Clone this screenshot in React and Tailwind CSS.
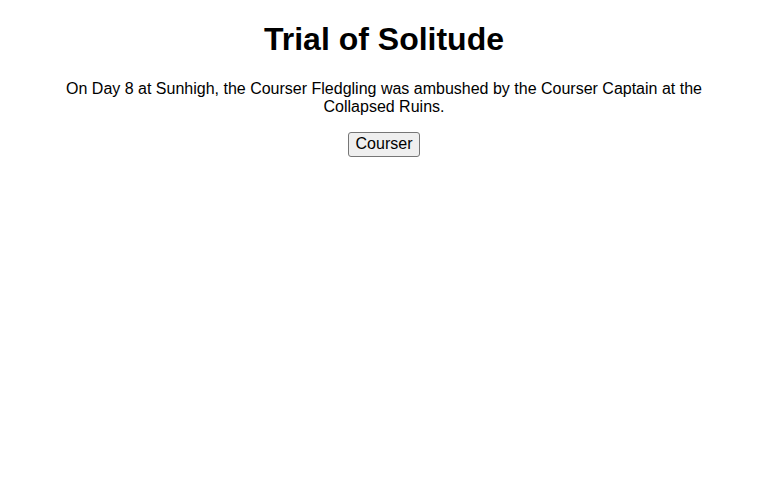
export default function App() {
  return (
    <div className="min-h-[480px] bg-white text-black px-[20px] text-center font-['Liberation_Sans',Arial,sans-serif]">
      <h1 className="text-[32px] leading-[37px] font-bold pt-[21px] mb-[22px]">Trial of Solitude</h1>
      <p className="text-[16px] leading-[18.4px] max-w-[660px] mx-auto mb-[15px]">
        On Day 8 at Sunhigh, the Courser Fledgling was ambushed by the Courser Captain at the Collapsed Ruins.
      </p>
      <button className="text-[16px] leading-[19px] px-[7px] pt-[1px] pb-[3px] bg-[#efefef] border border-[#767676] rounded-[3px] text-black">
        Courser
      </button>
    </div>
  );
}
